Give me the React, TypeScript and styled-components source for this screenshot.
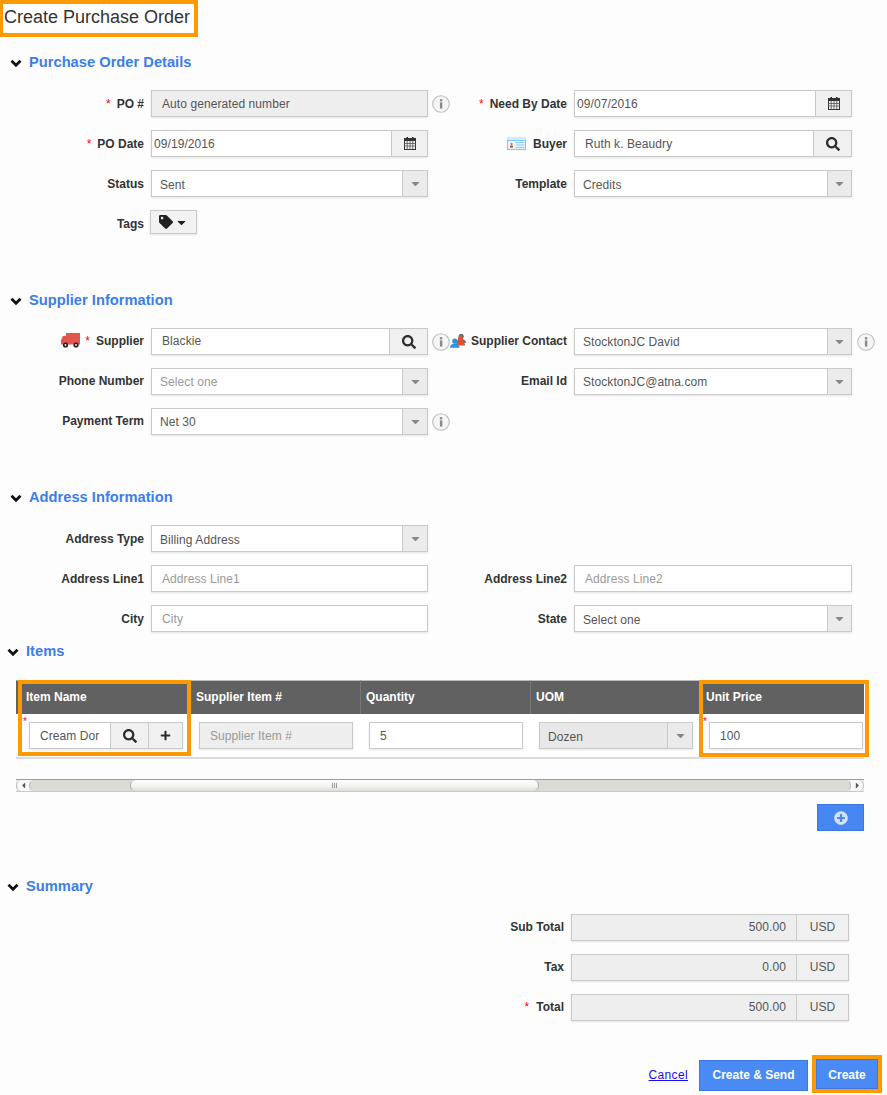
import React from 'react';
import styled, { createGlobalStyle } from 'styled-components';
import { FaCaretDown, FaCaretLeft, FaCaretRight, FaPlus, FaPlusCircle, FaSearch, FaTag } from 'react-icons/fa';

const GlobalStyle = createGlobalStyle`
  html, body {
    margin: 0;
    padding: 0;
    background: #fdfdfd;
    color: #333;
    font-family: "Liberation Sans", Arial, sans-serif;
    font-size: 12px;
  }
  * { box-sizing: border-box; }
`;

const Page = styled.div`
  width: 887px;
  height: 1095px;
  overflow: hidden;
`;

const orange = '#ff9900';

const Title = styled.h1`
  display: inline-block;
  vertical-align: top;
  margin: 0;
  width: 198px;
  height: 37px;
  padding: 1px 0 0 1px;
  border: 4px solid ${orange};
  border-left-width: 3px;
  background: #fff;
  font-size: 18px;
  font-weight: 400;
  line-height: 25px;
  color: #333;
  white-space: nowrap;
`;

const SectionHead = styled.div<{ $top: number; $left: number }>`
  display: flex;
  align-items: center;
  height: 20px;
  margin-top: ${(p) => p.$top}px;
  padding-left: ${(p) => p.$left}px;
  gap: 7px;
  color: #3b7eea;
  font-size: 14.7px;
  font-weight: 700;
  svg {
    margin-top: 2px;
  }
`;

const Label = styled.div`
  display: flex;
  align-items: center;
  justify-content: flex-end;
  gap: 5px;
  padding-right: 7px;
  font-weight: 700;
  color: #333;
  white-space: nowrap;
`;

const BuyerText = styled.span`
  margin-left: 2px;
`;

const FormGrid = styled.div<{ $lift?: boolean }>`
  display: grid;
  grid-template-columns: 151px 277px 22px 124px 278px 30px;
  grid-auto-rows: 27px;
  row-gap: 13px;
  margin-top: 18px;
  ${Label} {
    padding-bottom: ${(p) => (p.$lift ? 2 : 0)}px;
  }
`;

const Req = styled.span`
  color: #f00;
  font-weight: 400;
  margin-right: 1px;
`;

const Control = styled.div<{ $bg?: string }>`
  display: flex;
  align-items: stretch;
  height: 27px;
  border: 1px solid #c9c9c9;
  background: ${(p) => p.$bg || '#fff'};
  box-shadow: 0 1px 2px rgba(0, 0, 0, 0.1);
`;

const Value = styled.div<{ $pad: number; $muted?: boolean; $right?: boolean; $shift?: number }>`
  flex: 1;
  min-width: 0;
  overflow: hidden;
  display: flex;
  align-items: center;
  justify-content: ${(p) => (p.$right ? 'flex-end' : 'flex-start')};
  padding-left: ${(p) => p.$pad}px;
  padding-right: ${(p) => (p.$right ? 10 : 0)}px;
  padding-top: ${(p) => (p.$shift && p.$shift > 0 ? p.$shift : 0)}px;
  padding-bottom: ${(p) => (p.$shift && p.$shift < 0 ? -p.$shift : 0)}px;
  color: ${(p) => (p.$muted ? '#999' : '#555')};
  letter-spacing: 0.08px;
  white-space: nowrap;
`;

const Addon = styled.div<{ $w: number }>`
  flex: 0 0 ${(p) => p.$w}px;
  display: flex;
  align-items: center;
  justify-content: center;
  border-left: 1px solid #c9c9c9;
  background: #f0f0f0;
  color: #2b2b2b;
`;

const ArrowBox = styled(Addon)`
  background: #ebebeb;
  color: #888;
`;

const Cell = styled.div`
  display: flex;
  align-items: center;
`;

const InfoWrap = styled.div<{ $left: number }>`
  display: flex;
  align-items: center;
  padding-left: ${(p) => p.$left}px;
`;

const TagButton = styled.button`
  display: flex;
  align-items: center;
  justify-content: center;
  gap: 2px;
  width: 47px;
  height: 24px;
  margin: 0 0 3px -1px;
  padding: 0;
  border: 1px solid #c9c9c9;
  background: #f2f2f2;
  color: #222;
  box-shadow: 0 1px 2px rgba(0, 0, 0, 0.1);
`;

const ItemsTable = styled.div`
  position: relative;
  width: 848px;
  margin: 19px 0 0 16px;
  border-bottom: 2px solid #dcdcdc;
`;

const TableRow = styled.div`
  display: grid;
  grid-template-columns: 174px 170px 170px 170px 164px;
`;

const HeadCell = styled.div<{ $first?: boolean }>`
  height: 34px;
  display: flex;
  align-items: center;
  padding-left: ${(p) => (p.$first ? 9 : 5)}px;
  padding-bottom: 2px;
  background: #616161;
  border-top: 1px solid #bdbdbd;
  border-left: 1px solid ${(p) => (p.$first ? '#616161' : '#777')};
  color: #fff;
  font-weight: 700;
`;

const BodyCell = styled.div<{ $first?: boolean; $last?: boolean }>`
  position: relative;
  height: 43px;
  padding: 8px ${(p) => (p.$last ? 1 : 7)}px 0 ${(p) => (p.$first ? 13 : 9)}px;
  background: #fff;
`;

const CellReq = styled.span<{ $left: number }>`
  position: absolute;
  top: 3px;
  left: ${(p) => p.$left}px;
  color: #f00;
  font-size: 10px;
  line-height: 10px;
`;

const Highlight = styled.div<{ $left: number; $w: number; $h: number }>`
  position: absolute;
  top: 0;
  left: ${(p) => p.$left}px;
  width: ${(p) => p.$w}px;
  height: ${(p) => p.$h}px;
  border: 4px solid ${orange};
  pointer-events: none;
`;

const ScrollBar = styled.div`
  display: flex;
  align-items: stretch;
  width: 848px;
  height: 13px;
  margin: 20px 0 0 16px;
  background: #eeedec;
  border-top: 1px solid #9d9d9d;
  border-bottom: 1px solid #c9c9c9;
`;

const ScrollEnd = styled.div<{ $right?: boolean }>`
  flex: 0 0 13px;
  display: flex;
  align-items: center;
  justify-content: center;
  background: #f8f8f8;
  color: #555;
  border-radius: ${(p) => (p.$right ? '0 6px 6px 0' : '6px 0 0 6px')};
  border-${(p) => (p.$right ? 'right' : 'left')}: 1px solid #bbb;
  svg { width: 7px; height: 9px; }
`;

const ScrollTrack = styled.div`
  flex: 1;
  padding-left: 100px;
  background: #dbdad7;
  border-radius: 6px;
  border-left: 1px solid #bbb;
  border-right: 1px solid #bbb;
`;

const ScrollThumb = styled.div`
  width: 409px;
  height: 100%;
  display: flex;
  align-items: center;
  justify-content: center;
  gap: 1px;
  background: linear-gradient(#fff, #f2f1ef 60%, #dedcd8);
  border-left: 1px solid #aaa;
  border-right: 1px solid #aaa;
  border-radius: 6px;
`;

const Grip = styled.i`
  width: 1px;
  height: 5px;
  background: #999;
`;

const AddRow = styled.div`
  display: flex;
  justify-content: flex-end;
  margin: 12px 23px 0 0;
`;

const AddButton = styled.button`
  display: flex;
  align-items: center;
  justify-content: center;
  width: 47px;
  height: 27px;
  padding: 0;
  border: 1px solid #3b78e0;
  background: #4687f4;
  color: #d3e2fb;
`;

const SummaryList = styled.div`
  display: flex;
  flex-direction: column;
  gap: 13px;
  margin: 18px 38px 0 0;
`;

const SummaryRow = styled.div`
  display: flex;
  justify-content: flex-end;
  align-items: center;
  gap: 7px;
`;

const SummaryLabel = styled(Label)`
  padding: 0 0 2px;
  gap: 6px;
`;

const SummaryField = styled(Control)`
  width: 278px;
`;

const Currency = styled.div`
  flex: 0 0 52px;
  display: flex;
  align-items: center;
  justify-content: center;
  padding-bottom: 2px;
  border-left: 1px solid #c9c9c9;
  background: #f0f0f0;
  color: #555;
`;

const Footer = styled.div`
  display: flex;
  justify-content: flex-end;
  align-items: flex-start;
  margin: 34px 5px 0 0;
`;

const FooterActions = styled.div`
  display: flex;
  align-items: center;
  margin-top: 5px;
`;

const CancelLink = styled.a`
  margin: 0 11px 2px 0;
  color: #1a0dee;
  font-size: 12px;
  letter-spacing: 0.35px;
  text-decoration: underline;
`;

const PrimaryButton = styled.button<{ $w: number; $h: number; $top: number; $bottom: number }>`
  width: ${(p) => p.$w}px;
  height: ${(p) => p.$h}px;
  padding: ${(p) => p.$top}px 0 ${(p) => p.$bottom}px;
  border: 1px solid #3b78e0;
  background: #4a8af5;
  color: #fff;
  font: 700 12px "Liberation Sans", Arial, sans-serif;
`;

const CreateFrame = styled.div`
  height: 38px;
  margin-left: 4px;
  border: 4px solid ${orange};
`;

const ChevronIcon = () => (
  <svg width="12" height="9" viewBox="0 0 12 9">
    <path d="M1.500 1.800 L6 6.300 L10.500 1.800" fill="none" stroke="#111" strokeWidth="2.800" />
  </svg>
);

const InfoIcon = () => (
  <svg width="18" height="18" viewBox="0 0 18 18">
    <circle cx="9" cy="9" r="8.3" fill="#f6f6f6" stroke="#bdbdbd" strokeWidth="1.1" />
    <rect x="7.900" y="7.400" width="2.400" height="6.200" fill="#888" />
    <rect x="7.900" y="4.200" width="2.400" height="2.200" fill="#888" />
  </svg>
);

const CalendarIcon = () => (
  <svg width="12" height="13" viewBox="0 0 12 13">
    <rect x="2.500" y="0" width="1.500" height="3" fill="#222" />
    <rect x="8" y="0" width="1.500" height="3" fill="#222" />
    <rect x="0.500" y="1.500" width="11" height="11" fill="#f0f0f0" stroke="#333" />
    <rect x="0.500" y="1.500" width="11" height="2.500" fill="#333" />
    <path d="M0 6.500H12M0 9H12M3.200 4V12.500M6 4V12.500M8.800 4V12.500" stroke="#555" strokeWidth="0.8" />
  </svg>
);

const BuyerIcon = () => (
  <svg width="19" height="13" viewBox="0 0 19 13">
    <rect x="0" y="0" width="19" height="13" fill="#d2ebfc" />
    <rect x="0" y="3" width="19" height="10" fill="#7fc6f6" />
    <rect x="1" y="4" width="17" height="8" fill="#e6f5fe" />
    <rect x="2" y="5" width="5" height="6" fill="#fff" />
    <circle cx="4.500" cy="7" r="1.200" fill="#c8785a" />
    <rect x="3" y="8.600" width="3" height="2" fill="#a5503c" />
    <rect x="8.500" y="5" width="9" height="1" fill="#8ccbf5" />
    <rect x="8.500" y="7.500" width="9" height="1" fill="#8ccbf5" />
    <rect x="8.500" y="10" width="9" height="1" fill="#8ccbf5" />
  </svg>
);

const TruckIcon = () => (
  <svg width="19" height="15" viewBox="0 0 19 15">
    <path d="M5 0H19V11.500H0V7L2 3H5Z" fill="#e2574c" />
    <circle cx="4.500" cy="12" r="2.600" fill="#222" />
    <circle cx="4.500" cy="12" r="0.900" fill="#fff" />
    <circle cx="15" cy="12" r="2.600" fill="#222" />
    <circle cx="15" cy="12" r="0.900" fill="#fff" />
  </svg>
);

const Person = ({ x, y, color }: { x: number; y: number; color: string }) => (
  <g transform={`translate(${x} ${y})`} fill={color}>
    <circle cx="6" cy="3.200" r="3.200" />
    <path d="M0 11.500c0-3.500 2.500-5 6-5s6 1.500 6 5z" />
  </g>
);

const ContactsIcon = () => (
  <svg width="20" height="18" viewBox="0 0 20 18">
    <Person x={8} y={0} color="#6e6e6e" />
    <Person x={7} y={3} color="#ee4f2b" />
    <Person x={0} y={6} color="#2f8fe0" />
  </svg>
);

const SelectBox = ({ value, muted, arrow = 25, bg, shift }: { value: string; muted?: boolean; arrow?: number; bg?: string; shift?: number }) => (
  <Control $bg={bg}>
    <Value $pad={8} $muted={muted} $shift={shift}>{value}</Value>
    <ArrowBox $w={arrow}>
      <FaCaretDown size={13} />
    </ArrowBox>
  </Control>
);

const DateBox = ({ value }: { value: string }) => (
  <Control>
    <Value $pad={2}>{value}</Value>
    <Addon $w={36}>
      <CalendarIcon />
    </Addon>
  </Control>
);

const LookupBox = ({ value, shift }: { value: string; shift?: number }) => (
  <Control>
    <Value $pad={10} $shift={shift}>{value}</Value>
    <Addon $w={38}>
      <FaSearch size={14} />
    </Addon>
  </Control>
);

const TextBox = ({ value, muted, bg, pad = 10 }: { value: string; muted?: boolean; bg?: string; pad?: number }) => (
  <Control $bg={bg}>
    <Value $pad={pad} $muted={muted}>{value}</Value>
  </Control>
);

const Info = ({ left = 4 }: { left?: number }) => (
  <InfoWrap $left={left}>
    <InfoIcon />
  </InfoWrap>
);

const SummaryLine = ({ label, value, required }: { label: string; value: string; required?: boolean }) => (
  <SummaryRow>
    <SummaryLabel>
      {required && <Req>*</Req>}
      {label}
    </SummaryLabel>
    <SummaryField $bg="#eeeeee">
      <Value $pad={10} $right $shift={-2}>{value}</Value>
      <Currency>USD</Currency>
    </SummaryField>
  </SummaryRow>
);

export default function App() {
  return (
    <Page>
      <GlobalStyle />
      <Title>Create Purchase Order</Title>

      <SectionHead $top={15} $left={10}>
        <ChevronIcon />
        Purchase Order Details
      </SectionHead>
      <FormGrid>
        <Label><Req>*</Req>PO #</Label>
        <TextBox value="Auto generated number" bg="#eeeeee" />
        <Info />
        <Label><Req>*</Req>Need By Date</Label>
        <DateBox value="09/07/2016" />
        <div />

        <Label><Req>*</Req>PO Date</Label>
        <DateBox value="09/19/2016" />
        <div />
        <Label><BuyerIcon /><BuyerText>Buyer</BuyerText></Label>
        <LookupBox value="Ruth k. Beaudry" />
        <div />

        <Label>Status</Label>
        <SelectBox value="Sent" shift={2} />
        <div />
        <Label>Template</Label>
        <SelectBox value="Credits" arrow={24} shift={2} />
        <div />

        <Label>Tags</Label>
        <Cell>
          <TagButton>
            <FaTag size={14} />
            <FaCaretDown size={13} />
          </TagButton>
        </Cell>
      </FormGrid>

      <SectionHead $top={53} $left={10}>
        <ChevronIcon />
        Supplier Information
      </SectionHead>
      <FormGrid $lift>
        <Label><TruckIcon /><Req>*</Req>Supplier</Label>
        <LookupBox value="Blackie" shift={-2} />
        <Info />
        <Label><ContactsIcon />Supplier Contact</Label>
        <SelectBox value="StocktonJC David" arrow={24} />
        <Info left={5} />

        <Label>Phone Number</Label>
        <SelectBox value="Select one" muted />
        <div />
        <Label>Email Id</Label>
        <SelectBox value="StocktonJC@atna.com" arrow={24} />
        <div />

        <Label>Payment Term</Label>
        <SelectBox value="Net 30" />
        <Info />
      </FormGrid>

      <SectionHead $top={52} $left={10}>
        <ChevronIcon />
        Address Information
      </SectionHead>
      <FormGrid>
        <Label>Address Type</Label>
        <SelectBox value="Billing Address" shift={2} />
        <div />
        <div />
        <div />
        <div />

        <Label>Address Line1</Label>
        <TextBox value="Address Line1" muted />
        <div />
        <Label>Address Line2</Label>
        <TextBox value="Address Line2" muted />
        <div />

        <Label>City</Label>
        <TextBox value="City" muted />
        <div />
        <Label>State</Label>
        <SelectBox value="Select one" arrow={24} shift={2} />
        <div />
      </FormGrid>

      <SectionHead $top={9} $left={7}>
        <ChevronIcon />
        Items
      </SectionHead>
      <ItemsTable>
        <TableRow>
          <HeadCell $first>Item Name</HeadCell>
          <HeadCell>Supplier Item #</HeadCell>
          <HeadCell>Quantity</HeadCell>
          <HeadCell>UOM</HeadCell>
          <HeadCell>Unit Price</HeadCell>
        </TableRow>
        <TableRow>
          <BodyCell $first>
            <CellReq $left={7}>*</CellReq>
            <Control>
              <Value $pad={10}>Cream Dor</Value>
              <Addon $w={38}><FaSearch size={14} /></Addon>
              <Addon $w={34}><FaPlus size={11} /></Addon>
            </Control>
          </BodyCell>
          <BodyCell>
            <TextBox value="Supplier Item #" muted bg="#eeeeee" />
          </BodyCell>
          <BodyCell>
            <TextBox value="5" />
          </BodyCell>
          <BodyCell>
            <SelectBox value="Dozen" bg="#e9e8e8" shift={2} />
          </BodyCell>
          <BodyCell $last>
            <CellReq $left={3}>*</CellReq>
            <TextBox value="100" />
          </BodyCell>
        </TableRow>
        <Highlight $left={2} $w={173} $h={76} />
        <Highlight $left={683} $w={170} $h={77} />
      </ItemsTable>
      <ScrollBar>
        <ScrollEnd><FaCaretLeft /></ScrollEnd>
        <ScrollTrack>
          <ScrollThumb>
            <Grip />
            <Grip />
            <Grip />
          </ScrollThumb>
        </ScrollTrack>
        <ScrollEnd $right><FaCaretRight /></ScrollEnd>
      </ScrollBar>
      <AddRow>
        <AddButton>
          <FaPlusCircle size={14} />
        </AddButton>
      </AddRow>

      <SectionHead $top={45} $left={7}>
        <ChevronIcon />
        Summary
      </SectionHead>
      <SummaryList>
        <SummaryLine label="Sub Total" value="500.00" />
        <SummaryLine label="Tax" value="0.00" />
        <SummaryLine label="Total" value="500.00" required />
      </SummaryList>

      <Footer>
        <FooterActions>
          <CancelLink href="#">Cancel</CancelLink>
          <PrimaryButton $w={109} $h={31} $top={0} $bottom={2}>Create &amp; Send</PrimaryButton>
        </FooterActions>
        <CreateFrame>
          <PrimaryButton $w={62} $h={30} $top={2} $bottom={0}>Create</PrimaryButton>
        </CreateFrame>
      </Footer>
    </Page>
  );
}
